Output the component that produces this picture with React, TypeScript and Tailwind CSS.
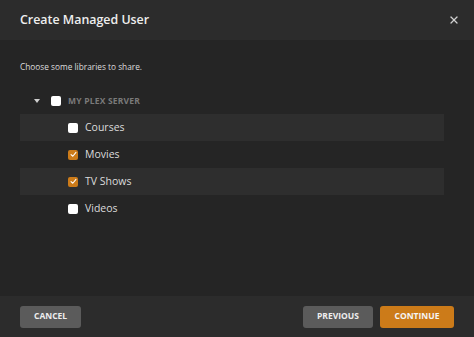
import { X } from 'lucide-react';

const libraries = [
  { name: 'Courses', checked: false },
  { name: 'Movies', checked: true },
  { name: 'TV Shows', checked: true },
  { name: 'Videos', checked: false },
];

function Check({ checked }: { checked: boolean }) {
  if (!checked) {
    return <span className="block w-[10px] h-[10px] rounded-[2px] bg-white" />;
  }
  return (
    <span className="flex items-center justify-center w-[10px] h-[10px] rounded-[2px] bg-[#cc7b19]">
      <svg width="7" height="7" viewBox="0 0 8 8" fill="none">
        <path d="M1.2 4.2 L3.2 6 L6.8 1.6" stroke="#fff" strokeWidth="1.2" strokeLinecap="round" strokeLinejoin="round" />
      </svg>
    </span>
  );
}

export default function App() {
  return (
    <div className="w-[474px] h-[337px] flex flex-col bg-[#252525] text-white font-['Open_Sans',sans-serif]">
      <div className="h-[40px] shrink-0 flex items-center justify-between pl-5 pr-[14px] bg-[#2c2c2c]">
        <h1 className="text-[12.4px] font-semibold text-[#eeeeee]">Create Managed User</h1>
        <X className="w-[12px] h-[12px] text-[#d0d0d0]" strokeWidth={2.5} />
      </div>

      <div className="flex-1 px-5 pt-[21px]">
        <p className="text-[8.3px] text-[#dddddd] leading-[12px]">Choose some libraries to share.</p>

        <div className="mt-[15px]">
          <div className="h-[26px] flex items-center pl-[14px]">
            <svg width="6" height="4" viewBox="0 0 6 4" className="mr-[11px]">
              <path d="M0 0 H6 L3 4 Z" fill="#cfcfcf" />
            </svg>
            <Check checked={false} />
            <span className="ml-[7px] text-[8.5px] font-bold tracking-[0.2px] text-[#7a7a7a]">MY PLEX SERVER</span>
          </div>
          {libraries.map((lib, i) => (
            <div
              key={lib.name}
              className={`h-[27px] w-[424px] flex items-center pl-[48px] ${i % 2 === 0 ? 'bg-[#2e2e2e]' : ''}`}
            >
              <Check checked={lib.checked} />
              <span className="ml-[7px] text-[10.5px] text-[#dcdcdc]">{lib.name}</span>
            </div>
          ))}
        </div>
      </div>

      <div className="h-[41px] shrink-0 flex items-center justify-between px-5 bg-[#2c2c2c]">
        <button className="h-[22px] px-[14px] rounded-[3px] bg-[#5b5b5b] text-[8.5px] font-bold text-[#eeeeee]">CANCEL</button>
        <div className="flex gap-[7px]">
          <button className="h-[22px] w-[70px] rounded-[3px] bg-[#5b5b5b] text-[8.5px] font-bold text-[#eeeeee]">PREVIOUS</button>
          <button className="h-[22px] w-[74px] rounded-[3px] bg-[#cc7b19] text-[8.5px] font-bold text-[#f5f5f5]">CONTINUE</button>
        </div>
      </div>
    </div>
  );
}
